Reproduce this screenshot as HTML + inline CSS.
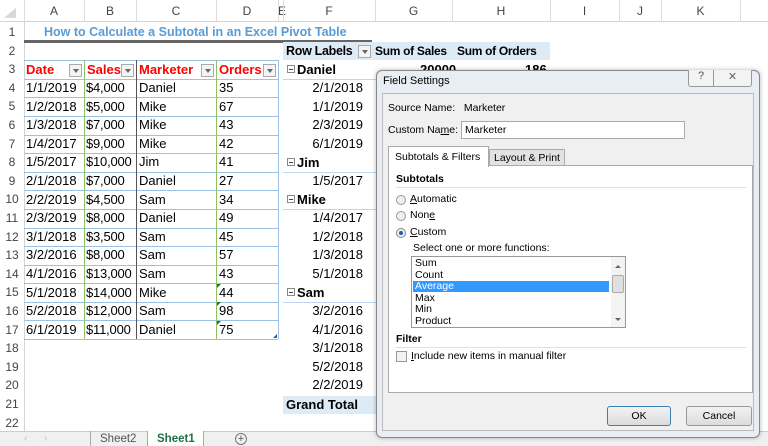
<!DOCTYPE html>
<html><head><meta charset="utf-8"><style>
*{margin:0;padding:0;box-sizing:border-box}
body{width:768px;height:446px;overflow:hidden;background:#fff;font-family:"Liberation Sans",sans-serif;position:relative}
.a{position:absolute;white-space:nowrap}
.c{font-size:13px;color:#000;line-height:18.6px}
.rn{position:absolute;left:0;width:24px;text-align:center;font-size:12px;color:#444;line-height:18.6px}
.ch{position:absolute;top:0;height:22px;line-height:22px;text-align:center;font-size:12px;color:#444}
.d{font-size:10.5px;color:#000}
.hl{position:absolute;height:1px;background:#9bc2e6}
.dd{position:absolute;width:13px;height:13px;border:1px solid #aaa;background:#f4f4f4}
.dd:after{content:"";position:absolute;left:3px;top:4px;border:3px solid transparent;border-top:4px solid #666}
.mb{display:inline-block;width:8px;height:8px;border:1px solid #888;position:relative;margin-right:2px;top:-1px}
.mb:after{content:"";position:absolute;left:1px;top:3px;width:4px;height:1px;background:#444}
</style></head><body>
<div class="a" style="left:0;top:0;width:768px;height:22px;background:#fff;border-bottom:1px solid #d4d4d4"></div>
<div class="a" style="left:4px;top:8px;width:0;height:0;border-left:12px solid transparent;border-bottom:10px solid #d8d8d8"></div>
<div class="ch" style="left:24px;width:60px">A</div>
<div class="ch" style="left:84px;width:52px">B</div>
<div class="ch" style="left:136px;width:80px">C</div>
<div class="ch" style="left:216px;width:62px">D</div>
<div class="ch" style="left:278px;width:5px">E</div>
<div class="ch" style="left:283px;width:92px">F</div>
<div class="ch" style="left:375px;width:77px">G</div>
<div class="ch" style="left:452px;width:98px">H</div>
<div class="ch" style="left:550px;width:69px">I</div>
<div class="ch" style="left:619px;width:42px">J</div>
<div class="ch" style="left:661px;width:79px">K</div>
<div class="a" style="left:24px;top:0;width:1px;height:22px;background:#ddd"></div>
<div class="a" style="left:84px;top:0;width:1px;height:22px;background:#ddd"></div>
<div class="a" style="left:136px;top:0;width:1px;height:22px;background:#ddd"></div>
<div class="a" style="left:216px;top:0;width:1px;height:22px;background:#ddd"></div>
<div class="a" style="left:278px;top:0;width:1px;height:22px;background:#ddd"></div>
<div class="a" style="left:283px;top:0;width:1px;height:22px;background:#ddd"></div>
<div class="a" style="left:375px;top:0;width:1px;height:22px;background:#ddd"></div>
<div class="a" style="left:452px;top:0;width:1px;height:22px;background:#ddd"></div>
<div class="a" style="left:550px;top:0;width:1px;height:22px;background:#ddd"></div>
<div class="a" style="left:619px;top:0;width:1px;height:22px;background:#ddd"></div>
<div class="a" style="left:661px;top:0;width:1px;height:22px;background:#ddd"></div>
<div class="a" style="left:740px;top:0;width:1px;height:22px;background:#ddd"></div>
<div class="a" style="left:24px;top:22px;width:1px;height:410px;background:#d4d4d4"></div>
<div class="rn" style="top:23px">1</div><div class="rn" style="top:41.6px">2</div><div class="rn" style="top:60.2px">3</div><div class="rn" style="top:78.8px">4</div><div class="rn" style="top:97.4px">5</div><div class="rn" style="top:116px">6</div><div class="rn" style="top:134.6px">7</div><div class="rn" style="top:153.2px">8</div><div class="rn" style="top:171.8px">9</div><div class="rn" style="top:190.4px">10</div><div class="rn" style="top:209px">11</div><div class="rn" style="top:227.6px">12</div><div class="rn" style="top:246.2px">13</div><div class="rn" style="top:264.8px">14</div><div class="rn" style="top:283.4px">15</div><div class="rn" style="top:302px">16</div><div class="rn" style="top:320.6px">17</div><div class="rn" style="top:339.2px">18</div><div class="rn" style="top:357.8px">19</div><div class="rn" style="top:376.4px">20</div><div class="rn" style="top:395px">21</div><div class="rn" style="top:413.6px">22</div>
<div class="a" style="left:44px;top:23px;font-size:12.5px;font-weight:bold;color:#5b9bd5;line-height:18px">How to Calculate a Subtotal in an Excel Pivot Table</div>
<div class="a" style="left:24px;top:40px;width:348px;height:3px;background:#666"></div>
<div class="hl" style="left:24px;top:60px;width:254px"></div>
<div class="hl" style="left:24px;top:79px;width:254px"></div>
<div class="hl" style="left:24px;top:97px;width:254px"></div>
<div class="hl" style="left:24px;top:116px;width:254px"></div>
<div class="hl" style="left:24px;top:135px;width:254px"></div>
<div class="hl" style="left:24px;top:153px;width:254px"></div>
<div class="hl" style="left:24px;top:172px;width:254px"></div>
<div class="hl" style="left:24px;top:190px;width:254px"></div>
<div class="hl" style="left:24px;top:209px;width:254px"></div>
<div class="hl" style="left:24px;top:228px;width:254px"></div>
<div class="hl" style="left:24px;top:246px;width:254px"></div>
<div class="hl" style="left:24px;top:265px;width:254px"></div>
<div class="hl" style="left:24px;top:283px;width:254px"></div>
<div class="hl" style="left:24px;top:302px;width:254px"></div>
<div class="hl" style="left:24px;top:320px;width:254px"></div>
<div class="hl" style="left:24px;top:339px;width:254px"></div>
<div class="a" style="left:84px;top:60px;width:1px;height:279px;background:#8cc168"></div>
<div class="a" style="left:216px;top:60px;width:1px;height:279px;background:#8cc168"></div>
<div class="a" style="left:136px;top:60px;width:1px;height:279px;background:#555"></div>
<div class="a" style="left:278px;top:60px;width:1px;height:279px;background:#9bc2e6"></div>
<div class="a" style="left:273px;top:334px;width:0;height:0;border-left:4px solid transparent;border-bottom:4px solid #2a5ea8"></div>
<div class="a c" style="left:26px;top:61px;color:#f00;font-weight:bold">Date</div><div class="dd" style="left:69px;top:64px"></div>
<div class="a c" style="left:87px;top:61px;color:#f00;font-weight:bold">Sales</div><div class="dd" style="left:121px;top:64px"></div>
<div class="a c" style="left:139px;top:61px;color:#f00;font-weight:bold">Marketer</div><div class="dd" style="left:201px;top:64px"></div>
<div class="a c" style="left:219px;top:61px;color:#f00;font-weight:bold">Orders</div><div class="dd" style="left:263px;top:64px"></div>
<div class="a c" style="left:26px;top:79px;line-height:18.6px">1/1/2019<br>1/2/2018<br>1/3/2018<br>1/4/2017<br>1/5/2017<br>2/1/2018<br>2/2/2019<br>2/3/2019<br>3/1/2018<br>3/2/2016<br>4/1/2016<br>5/1/2018<br>5/2/2018<br>6/1/2019</div>
<div class="a c" style="left:86px;top:79px;letter-spacing:-0.2px">$4,000<br>$5,000<br>$7,000<br>$9,000<br>$10,000<br>$7,000<br>$4,500<br>$8,000<br>$3,500<br>$8,000<br>$13,000<br>$14,000<br>$12,000<br>$11,000</div>
<div class="a c" style="left:139px;top:79px">Daniel<br>Mike<br>Mike<br>Mike<br>Jim<br>Daniel<br>Sam<br>Daniel<br>Sam<br>Sam<br>Sam<br>Mike<br>Sam<br>Daniel</div>
<div class="a c" style="left:219px;top:79px">35<br>67<br>43<br>42<br>41<br>27<br>34<br>49<br>45<br>57<br>43<br>44<br>98<br>75</div>
<div class="a" style="left:217px;top:284px;border-right:4px solid transparent;border-top:4px solid #1a7a1a"></div>
<div class="a" style="left:217px;top:302px;border-right:4px solid transparent;border-top:4px solid #1a7a1a"></div>
<div class="a" style="left:217px;top:321px;border-right:4px solid transparent;border-top:4px solid #1a7a1a"></div>
<div class="a" style="left:283px;top:42px;width:267px;height:18px;background:#ddebf7"></div>
<div class="a c" style="left:286px;top:42px;font-weight:bold;font-size:12.5px;letter-spacing:-0.3px">Row Labels</div><div class="dd" style="left:358px;top:45px"></div>
<div class="a c" style="left:375px;top:42px;font-weight:bold;font-size:12px;letter-spacing:-0.3px">Sum of Sales</div>
<div class="a c" style="left:457px;top:42px;font-weight:bold;font-size:12px;letter-spacing:-0.3px">Sum of Orders</div>
<div class="a c" style="left:420px;top:61px;font-weight:bold">20000</div>
<div class="a c" style="left:525px;top:61px;font-weight:bold">186</div>
<div class="hl" style="left:283px;top:79px;width:267px;background:#bdd7ee"></div>
<div class="hl" style="left:283px;top:172px;width:267px;background:#bdd7ee"></div>
<div class="hl" style="left:283px;top:209px;width:267px;background:#bdd7ee"></div>
<div class="hl" style="left:283px;top:302px;width:267px;background:#bdd7ee"></div>
<div class="a c" style="left:287px;top:61px;font-weight:bold"><span class="mb"></span>Daniel</div>
<div class="a c" style="left:287px;top:154px;font-weight:bold"><span class="mb"></span>Jim</div>
<div class="a c" style="left:287px;top:191px;font-weight:bold"><span class="mb"></span>Mike</div>
<div class="a c" style="left:287px;top:284px;font-weight:bold"><span class="mb"></span>Sam</div>
<div class="a c" style="left:283px;top:79px;width:80px;text-align:right">2/1/2018<br>1/1/2019<br>2/3/2019<br>6/1/2019</div>
<div class="a c" style="left:283px;top:172px;width:80px;text-align:right">1/5/2017</div>
<div class="a c" style="left:283px;top:209px;width:80px;text-align:right">1/4/2017<br>1/2/2018<br>1/3/2018<br>5/1/2018</div>
<div class="a c" style="left:283px;top:302px;width:80px;text-align:right">3/2/2016<br>4/1/2016<br>3/1/2018<br>5/2/2018<br>2/2/2019</div>
<div class="a" style="left:283px;top:396px;width:100px;height:18px;background:#ddebf7"></div>
<div class="a c" style="left:286px;top:396px;font-weight:bold">Grand Total</div>
<div class="a" style="left:0;top:431px;width:768px;height:15px;background:#f0f0f0;border-top:1px solid #ccc"></div>
<div class="a" style="left:24px;top:433px;font-size:10px;color:#bbb">‹ &nbsp;&nbsp;&nbsp;&nbsp; ›</div>
<div class="a" style="left:90px;top:431px;width:1px;height:15px;background:#aaa"></div>
<div class="a" style="left:100px;top:433px;font-size:11.5px;color:#555">Sheet2</div>
<div class="a" style="left:147px;top:431px;width:57px;height:15px;background:#fff;border-left:1px solid #aaa;border-right:1px solid #aaa"></div>
<div class="a" style="left:157px;top:433px;font-size:11.5px;color:#217346;font-weight:bold">Sheet1</div>
<div class="a" style="left:235px;top:433px;width:12px;height:12px;border:1px solid #777;border-radius:50%;font-size:11px;line-height:10px;text-align:center;color:#555">+</div>
<div class="a" style="left:376px;top:70px;width:384px;height:368px;background:#e9eef4;border:1px solid #888;border-radius:6px;box-shadow:0 0 4px rgba(0,0,0,.3)"></div>
<div class="a d" style="left:383px;top:75px;font-size:11px">Field Settings</div>
<div class="a" style="left:688px;top:70px;width:26px;height:17px;border:1px solid #999;border-top:none;background:#f3f3f3;border-radius:0 0 0 3px;font-size:11px;text-align:center;color:#555">?</div>
<div class="a" style="left:714px;top:70px;width:38px;height:17px;border:1px solid #999;border-top:none;border-left:none;background:#f3f3f3;border-radius:0 0 3px 0;font-size:11px;text-align:center;color:#666">✕</div>
<div class="a" style="left:382px;top:93px;width:372px;height:338px;background:#f0f0f0;border:1px solid #bbb"></div>
<div class="a d" style="left:388px;top:102px">Source Name:&nbsp;&nbsp; Marketer</div>
<div class="a d" style="left:388px;top:124px">Custom Na<u>m</u>e:</div>
<div class="a" style="left:461px;top:121px;width:224px;height:18px;background:#fff;border:1px solid #aaa"></div>
<div class="a d" style="left:465px;top:124px">Marketer</div>
<div class="a" style="left:388px;top:165px;width:365px;height:228px;background:#fff;border:1px solid #aaa"></div>
<div class="a" style="left:489px;top:149px;width:76px;height:17px;background:#e2e2e2;border:1px solid #aaa"></div>
<div class="a d" style="left:494px;top:152px">Layout &amp; Print</div>
<div class="a" style="left:388px;top:146px;width:101px;height:21px;background:#fff;border:1px solid #aaa;border-bottom:none"></div>
<div class="a d" style="left:395px;top:151px">Subtotals &amp; Filters</div>
<div class="a d" style="left:396px;top:173px;font-weight:bold">Subtotals</div>
<div class="a" style="left:396px;top:187px;width:350px;height:1px;background:#dde"></div>
<div class="a" style="left:396px;top:195px;width:10px;height:10px;border:1px solid #999;border-radius:50%;background:#eee"></div>
<div class="a d" style="left:410px;top:193px"><u>A</u>utomatic</div>
<div class="a" style="left:396px;top:211px;width:10px;height:10px;border:1px solid #999;border-radius:50%;background:#eee"></div>
<div class="a d" style="left:410px;top:209px">Non<u>e</u></div>
<div class="a" style="left:396px;top:228px;width:10px;height:10px;border:1px solid #888;border-radius:50%;background:#eee"><div style="margin:2px;width:4px;height:4px;border-radius:50%;background:#1c5fa8"></div></div>
<div class="a d" style="left:410px;top:226px"><u>C</u>ustom</div>
<div class="a d" style="left:413px;top:242px">Select one or more functions:</div>
<div class="a" style="left:411px;top:256px;width:215px;height:72px;background:#fff;border:1px solid #999"></div>
<div class="a" style="left:413px;top:281px;width:196px;height:11px;background:#3399ff"></div>
<div class="a d" style="left:415px;top:258px;line-height:11.6px">Sum<br>Count<br><span style="color:#fff">Average</span><br>Max<br>Min<br>Product</div>
<div class="a" style="left:611px;top:257px;width:14px;height:70px;background:#f3f3f3"></div>
<div class="a" style="left:612px;top:275px;width:12px;height:18px;background:#e0e0e0;border:1px solid #aaa;border-radius:2px"></div>
<div class="a" style="left:615px;top:262px;border:3px solid transparent;border-bottom:3px solid #666"></div>
<div class="a" style="left:615px;top:318px;border:3px solid transparent;border-top:3px solid #666"></div>
<div class="a d" style="left:396px;top:333px;font-weight:bold">Filter</div>
<div class="a" style="left:396px;top:347px;width:350px;height:1px;background:#dde"></div>
<div class="a" style="left:396px;top:351px;width:11px;height:11px;border:1px solid #999;background:#f3f3f3"></div>
<div class="a d" style="left:411px;top:350px"><u>I</u>nclude new items in manual filter</div>
<div class="a" style="left:607px;top:406px;width:64px;height:20px;border:1px solid #3c7fb1;border-radius:3px;background:linear-gradient(#f2f2f2,#dcdcdc);font-size:10.5px;text-align:center;line-height:18px">OK</div>
<div class="a" style="left:686px;top:406px;width:66px;height:20px;border:1px solid #999;border-radius:3px;background:linear-gradient(#f2f2f2,#dcdcdc);font-size:10.5px;text-align:center;line-height:18px">Cancel</div>
</body></html>
